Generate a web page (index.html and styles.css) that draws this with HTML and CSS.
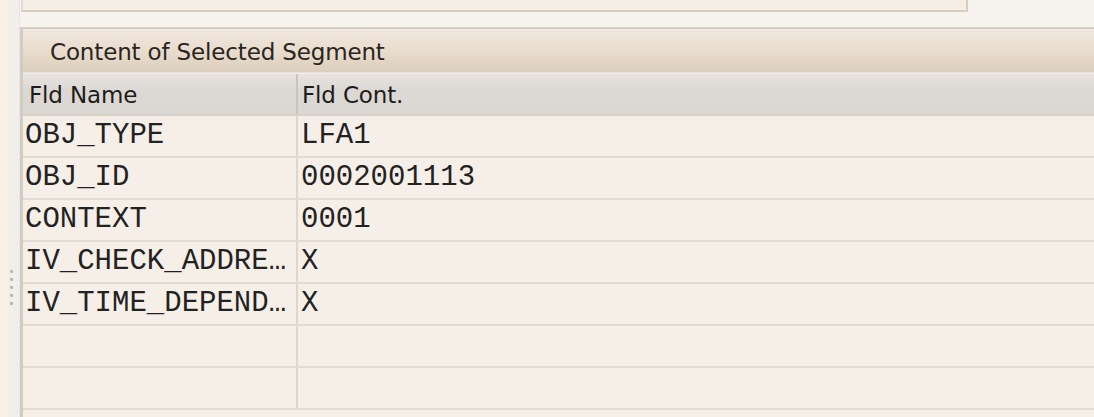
FILE: index.html
```html
<!DOCTYPE html>
<html>
<head>
<meta charset="utf-8">
<link rel="stylesheet" href="styles.css">
</head>
<body>
<div class="root">
  <div class="gutter">
    <div class="outer"></div>
    <div class="splitter">
      <div class="grip"><span></span><span></span><span></span><span></span><span></span></div>
    </div>
  </div>
  <div class="main">
    <div class="topbox"></div>
    <div class="panel">
      <div class="title">Content of Selected Segment</div>
      <div class="grid">
        <div class="hrow">
          <div class="c1">Fld Name</div>
          <div class="c2">Fld Cont.</div>
        </div>
        <div class="row"><div class="c1">OBJ_TYPE</div><div class="c2">LFA1</div></div>
        <div class="row"><div class="c1">OBJ_ID</div><div class="c2">0002001113</div></div>
        <div class="row"><div class="c1">CONTEXT</div><div class="c2">0001</div></div>
        <div class="row"><div class="c1">IV_CHECK_ADDRE…</div><div class="c2">X</div></div>
        <div class="row"><div class="c1">IV_TIME_DEPEND…</div><div class="c2">X</div></div>
        <div class="row"><div class="c1"></div><div class="c2"></div></div>
        <div class="row"><div class="c1"></div><div class="c2"></div></div>
      </div>
    </div>
  </div>
</div>
</body>
</html>
```

FILE: styles.css
```css
html, body {
  margin: 0;
  padding: 0;
}
body {
  width: 1094px;
  height: 417px;
  overflow: hidden;
  background: #f7f4f0;
}
.root {
  display: flex;
  height: 417px;
}
.gutter {
  display: flex;
  width: 20px;
  flex: none;
}
.outer {
  width: 8px;
  background: #f8efe5;
}
.splitter {
  width: 12px;
  background: #f1efec;
  border-right: 1px solid #e9e6e2;
  box-sizing: border-box;
  display: flex;
  flex-direction: column;
  padding-top: 270px;
}
.grip {
  display: flex;
  flex-direction: column;
  gap: 5px;
  padding-left: 2px;
}
.grip span {
  width: 3px;
  height: 3px;
  background: #b9b4ad;
  border-radius: 1px;
}
.main {
  flex: 1;
  display: flex;
  flex-direction: column;
  min-width: 0;
}
.topbox {
  height: 12px;
  width: 947px;
  box-sizing: border-box;
  background: #f5eee6;
  border-left: 2px solid #e2dbd0;
  border-right: 2px solid #d8cebf;
  border-bottom: 2px solid #d8cebf;
  margin-left: 1px;
}
.panel {
  margin-top: 15px;
  border-top: 2px solid #d6cfc4;
  border-left: 3px solid #d2cbc0;
  background: #f5efe8;
  flex: 1;
  display: flex;
  flex-direction: column;
  box-shadow: inset 0 1px 0 #ece7e0;
}
.title {
  height: 42px;
  margin-top: 2px;
  box-sizing: border-box;
  background: linear-gradient(#f0e6db, #e8dccd 50%, #dccebb);
  border-top: 1px solid #e9e1d6;
  border-bottom: 1px solid #e8e2da;
  font-family: "DejaVu Sans", sans-serif;
  font-size: 23px;
  color: #2a2522;
  padding-left: 27px;
  line-height: 41px;
  letter-spacing: -0.15px;
}
.grid {
  display: flex;
  flex-direction: column;
}
.hrow {
  display: flex;
  height: 43px;
  box-sizing: border-box;
  background: linear-gradient(#e7e4e0, #dcd9d5 40%, #dbd8d4);
  border-top: 1px solid #efece9;
  border-bottom: 2px solid #d6d0c8;
  font-family: "DejaVu Sans", sans-serif;
  font-size: 23px;
  letter-spacing: -0.15px;
  color: #1e1c1b;
  line-height: 42px;
}
.hrow .c1 {
  width: 275px;
  padding-left: 6px;
  box-sizing: border-box;
  border-right: 2px solid #c9c4bd;
}
.hrow .c2 {
  padding-left: 4px;
}
.row {
  display: flex;
  height: 42px;
  box-sizing: border-box;
  border-bottom: 2px solid #e2dbd1;
  font-family: "Liberation Mono", monospace;
  font-size: 29px;
  color: #222;
  line-height: 40px;
}
.row .c1 {
  width: 275px;
  padding-left: 2px;
  box-sizing: border-box;
  border-right: 2px solid #ddd6cc;
  white-space: nowrap;
  overflow: hidden;
}
.row .c2 {
  padding-left: 3px;
}
```
